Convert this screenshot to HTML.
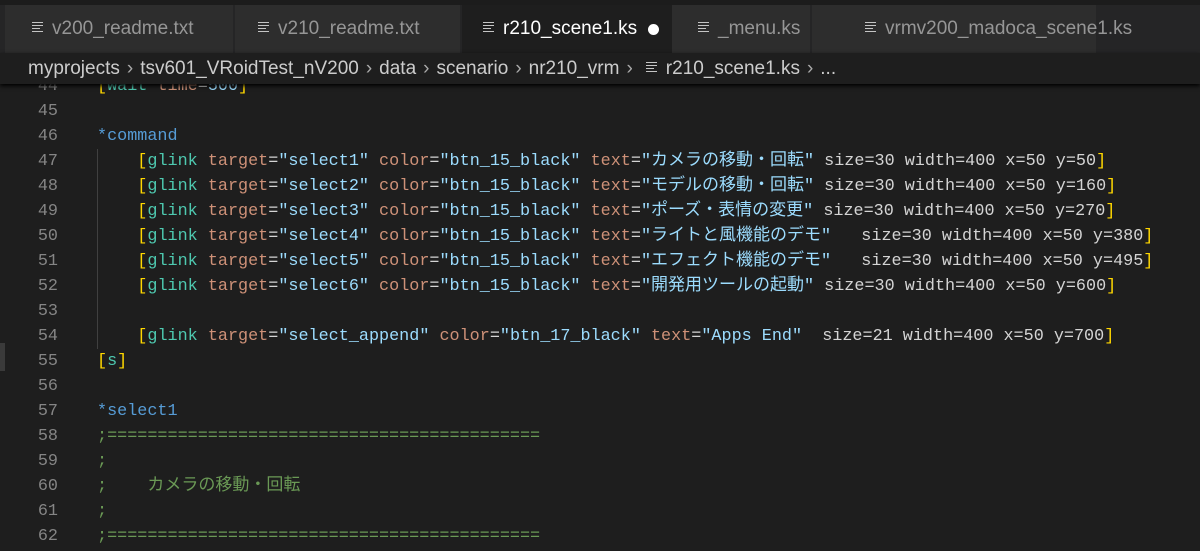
<!DOCTYPE html>
<html><head><meta charset="utf-8"><style>
body{margin:0;width:1200px;height:551px;overflow:hidden;background:#1e1e1e;position:relative;font-family:"Liberation Sans","Noto Sans CJK JP",sans-serif}
.top{position:absolute;left:0;top:0;width:1200px;height:5px;background:#1c1c1c}
.bar{position:absolute;left:0;top:5px;width:1200px;height:48px;background:#252526}
.tab{position:absolute;top:5px;height:48px;background:#2d2d2d;color:#969696;font-size:19px;line-height:48px;box-sizing:border-box;white-space:nowrap}
.tab.act{background:#1e1e1e;color:#fff}
.ic{display:inline-block;width:11px;height:10px;vertical-align:middle;margin-right:9px;position:relative;top:-2px}
.ic i{position:absolute;left:0;height:1.5px;background:#c5c5c5}
.bc{position:absolute;left:0;top:53px;width:1200px;height:31px;background:#1e1e1e;color:#cccccc;font-size:19px;line-height:31px;box-shadow:0 2px 4px #000;z-index:2;white-space:nowrap}
.ch{display:inline-block;margin:0 7px;color:#aaa}
.code{position:absolute;left:0;top:74px;width:1200px;font-family:"Liberation Mono","Noto Sans CJK JP",monospace;font-size:16.8px;color:#d4d4d4}
.ln{height:25px;line-height:25px;white-space:pre;position:relative}
.n{position:absolute;right:1142px;color:#858585;text-align:right}
.t{position:absolute;left:97px}
.j{font-size:17px}
.b{color:#ffd700}.g{color:#4ec9b0}.a{color:#ce9178}.v{color:#9cdcfe}.l{color:#569cd6}.c{color:#6a9955}
.guide{position:absolute;left:97px;top:149px;width:1px;height:200px;background:#404040}
.sc{position:absolute;left:0;top:343px;width:5px;height:28px;background:#3a3a3a}
</style></head><body>
<div class="top"></div><div class="bar"></div>
<div class="tab" style="left:5px;width:228px;padding-left:27px"><span class="ic"><i style="top:0;width:11px"></i><i style="top:3px;width:11px"></i><i style="top:6px;width:8px"></i><i style="top:9px;width:11px"></i></span>v200_readme.txt</div>
<div class="tab" style="left:235px;width:225px;padding-left:23px"><span class="ic"><i style="top:0;width:11px"></i><i style="top:3px;width:11px"></i><i style="top:6px;width:8px"></i><i style="top:9px;width:11px"></i></span>v210_readme.txt</div>
<div class="tab act" style="left:462px;width:210px;padding-left:21px"><span class="ic"><i style="top:0;width:11px"></i><i style="top:3px;width:11px"></i><i style="top:6px;width:8px"></i><i style="top:9px;width:11px"></i></span>r210_scene1.ks<span style="position:absolute;left:186px;top:19px;width:11px;height:11px;border-radius:50%;background:#fff"></span></div>
<div class="tab" style="left:672px;width:138px;padding-left:26px"><span class="ic"><i style="top:0;width:11px"></i><i style="top:3px;width:11px"></i><i style="top:6px;width:8px"></i><i style="top:9px;width:11px"></i></span>_menu.ks</div>
<div class="tab" style="left:812px;width:284px;padding-left:53px"><span class="ic"><i style="top:0;width:11px"></i><i style="top:3px;width:11px"></i><i style="top:6px;width:8px"></i><i style="top:9px;width:11px"></i></span>vrmv200_madoca_scene1.ks</div>
<div class="bc"><span style="position:absolute;left:28px">myprojects<span class="ch">›</span>tsv601_VRoidTest_nV200<span class="ch">›</span>data<span class="ch">›</span>scenario<span class="ch">›</span>nr210_vrm<span class="ch">›</span><span class="ic" style="margin-left:6px"><i style="top:0;width:11px"></i><i style="top:3px;width:11px"></i><i style="top:6px;width:8px"></i><i style="top:9px;width:11px"></i></span>r210_scene1.ks<span class="ch">›</span>...</span></div>
<div class="guide"></div><div class="sc"></div>
<div class="code">
<div class="ln"><span class="n">44</span><span class="t"><span class="b">[</span><span class="g">wait</span> <span class="a">time</span>=<span class="v">500</span><span class="b">]</span></span></div>
<div class="ln"><span class="n">45</span></div>
<div class="ln"><span class="n">46</span><span class="t l">*command</span></div>
<div class="ln"><span class="n">47</span><span class="t">    <span class="b">[</span><span class="g">glink</span> <span class="a">target</span>=<span class="v">"select1"</span> <span class="a">color</span>=<span class="v">"btn_15_black"</span> <span class="a">text</span>=<span class="v">"<span class="j">カメラの移動・回転</span>"</span> size=30 width=400 x=50 y=50<span class="b">]</span></span></div>
<div class="ln"><span class="n">48</span><span class="t">    <span class="b">[</span><span class="g">glink</span> <span class="a">target</span>=<span class="v">"select2"</span> <span class="a">color</span>=<span class="v">"btn_15_black"</span> <span class="a">text</span>=<span class="v">"<span class="j">モデルの移動・回転</span>"</span> size=30 width=400 x=50 y=160<span class="b">]</span></span></div>
<div class="ln"><span class="n">49</span><span class="t">    <span class="b">[</span><span class="g">glink</span> <span class="a">target</span>=<span class="v">"select3"</span> <span class="a">color</span>=<span class="v">"btn_15_black"</span> <span class="a">text</span>=<span class="v">"<span class="j">ポーズ・表情の変更</span>"</span> size=30 width=400 x=50 y=270<span class="b">]</span></span></div>
<div class="ln"><span class="n">50</span><span class="t">    <span class="b">[</span><span class="g">glink</span> <span class="a">target</span>=<span class="v">"select4"</span> <span class="a">color</span>=<span class="v">"btn_15_black"</span> <span class="a">text</span>=<span class="v">"<span class="j">ライトと風機能のデモ</span>"</span>   size=30 width=400 x=50 y=380<span class="b">]</span></span></div>
<div class="ln"><span class="n">51</span><span class="t">    <span class="b">[</span><span class="g">glink</span> <span class="a">target</span>=<span class="v">"select5"</span> <span class="a">color</span>=<span class="v">"btn_15_black"</span> <span class="a">text</span>=<span class="v">"<span class="j">エフェクト機能のデモ</span>"</span>   size=30 width=400 x=50 y=495<span class="b">]</span></span></div>
<div class="ln"><span class="n">52</span><span class="t">    <span class="b">[</span><span class="g">glink</span> <span class="a">target</span>=<span class="v">"select6"</span> <span class="a">color</span>=<span class="v">"btn_15_black"</span> <span class="a">text</span>=<span class="v">"<span class="j">開発用ツールの起動</span>"</span> size=30 width=400 x=50 y=600<span class="b">]</span></span></div>
<div class="ln"><span class="n">53</span></div>
<div class="ln"><span class="n">54</span><span class="t">    <span class="b">[</span><span class="g">glink</span> <span class="a">target</span>=<span class="v">"select_append"</span> <span class="a">color</span>=<span class="v">"btn_17_black"</span> <span class="a">text</span>=<span class="v">"Apps End"</span>  size=21 width=400 x=50 y=700<span class="b">]</span></span></div>
<div class="ln"><span class="n">55</span><span class="t"><span class="b">[</span><span class="g">s</span><span class="b">]</span></span></div>
<div class="ln"><span class="n">56</span></div>
<div class="ln"><span class="n">57</span><span class="t l">*select1</span></div>
<div class="ln"><span class="n">58</span><span class="t c">;===========================================</span></div>
<div class="ln"><span class="n">59</span><span class="t c">;</span></div>
<div class="ln"><span class="n">60</span><span class="t c">;    <span class="j">カメラの移動・回転</span></span></div>
<div class="ln"><span class="n">61</span><span class="t c">;</span></div>
<div class="ln"><span class="n">62</span><span class="t c">;===========================================</span></div>
</div>
</body></html>
